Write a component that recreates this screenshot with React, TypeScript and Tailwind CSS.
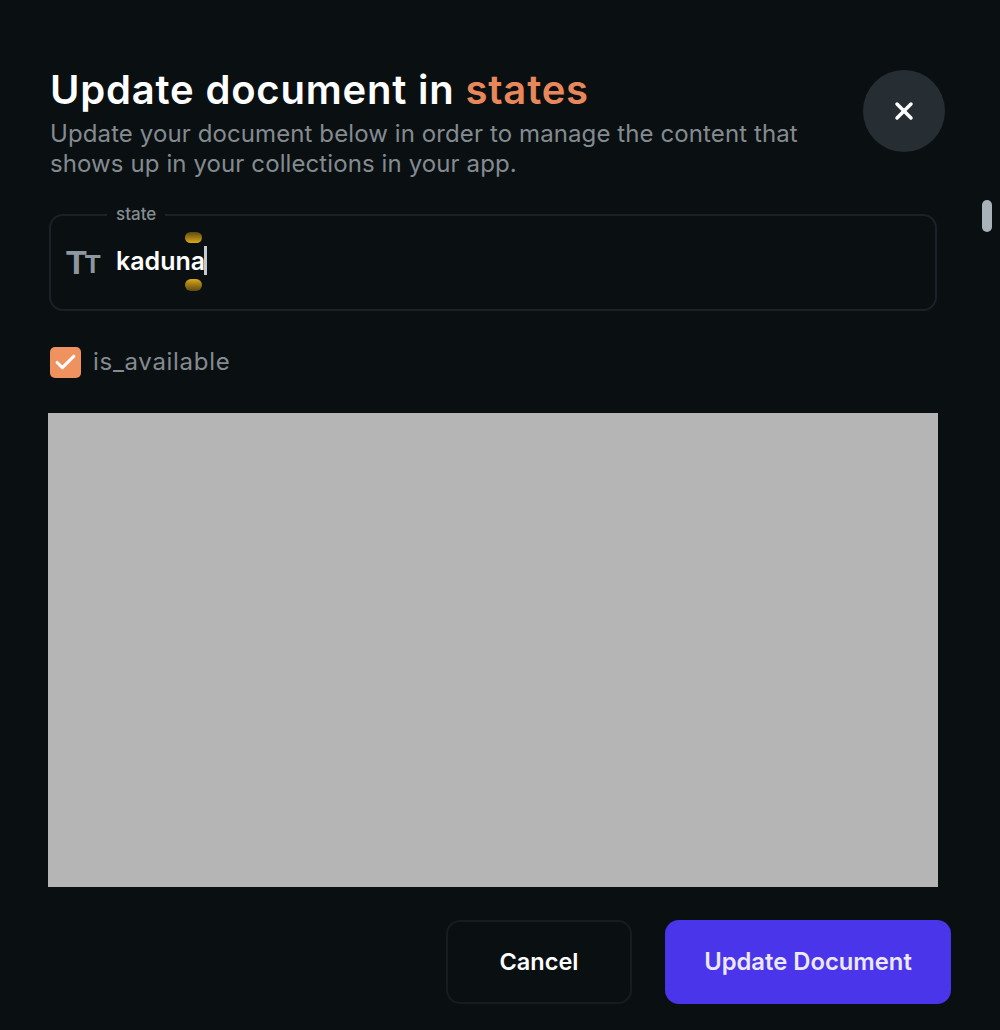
import { Check, X } from "lucide-react";

export default function App() {
    return (
        <div className="relative h-[1030px] w-[1000px] overflow-hidden bg-[#0a0f12] pt-[66px] pl-[48px] font-['Inter','Liberation_Sans',sans-serif]">
            {/* header */}
            <div className="flex items-start justify-between pr-[55px]">
                <div className="pl-[2px]">
                    <h1 className="text-[40px] leading-[48px] font-semibold tracking-[0.8px] text-white">
                        Update document in <span className="text-[#e8875a]">states</span>
                    </h1>
                    <p className="mt-[5px] w-[775px] text-[24px] leading-[30px] font-normal tracking-[0.1px] text-[#848b90]">
                        Update your document below in order to manage the content that shows up in your collections in your app.
                    </p>
                </div>
                <button className="mt-[4px] flex h-[82px] w-[82px] items-center justify-center rounded-full bg-[#262d33] text-white">
                    <X size={28} strokeWidth={3} />
                </button>
            </div>

            <div className="absolute top-[200px] left-[982px] h-[32px] w-[10px] rounded-full bg-[#a9b2b9]" />

            {/* state field */}
            <div className="relative mt-[35px] ml-[1px] flex h-[97px] w-[888px] items-center rounded-[14px] border-2 border-[#1b2227] pl-[15px]">
                <span className="absolute top-[-13px] left-[56px] bg-[#0a0f12] px-[9px] text-[17px] leading-[22px] font-medium text-[#858c91]">state</span>
                <span className="-mt-[2px] flex w-[50px] items-end font-['Liberation_Sans',sans-serif] font-bold text-[#8d979f]">
                    <span className="text-[34px] leading-[32px]">T</span>
                    <span className="-ml-[2px] text-[26px] leading-[27px]">T</span>
                </span>
                <span className="relative -mt-[4px] text-[25px] leading-[32px] font-semibold text-white">
                    kaduna
                    <span className="absolute top-[1px] -right-[2px] h-[29px] w-[3px] bg-[#c2cad0]" />
                    <span className="absolute top-[-13px] right-[3px] h-[11px] w-[17px] rounded-full bg-linear-to-b from-[#5f4a10] to-[#dca918]" />
                    <span className="absolute bottom-[-14px] right-[3px] h-[12px] w-[17px] rounded-full bg-linear-to-b from-[#dca918] to-[#5f4a10]" />
                </span>
            </div>

            {/* is_available */}
            <div className="mt-[36px] ml-[2px] flex items-center gap-[12px]">
                <span className="flex h-[31px] w-[31px] items-center justify-center rounded-[5px] bg-[#f0925f] text-white">
                    <Check size={25} strokeWidth={3} />
                </span>
                <span className="-mt-[2px] text-[24px] leading-[31px] font-normal tracking-[0.7px] text-[#848b90]">is_available</span>
            </div>

            <div className="mt-[35px] h-[474px] w-[890px] bg-[#b5b5b5]" />

            {/* actions */}
            <div className="mt-[33px] flex justify-end gap-[33px] pr-[49px]">
                <button className="h-[84px] w-[186px] rounded-[14px] border-2 border-[#171c20] text-[23.5px] font-semibold text-white">Cancel</button>
                <button className="h-[84px] w-[286px] rounded-[14px] bg-[#4a35ea] text-[23.8px] font-semibold text-[#ece9ff]">Update Document</button>
            </div>
        </div>
    );
}
